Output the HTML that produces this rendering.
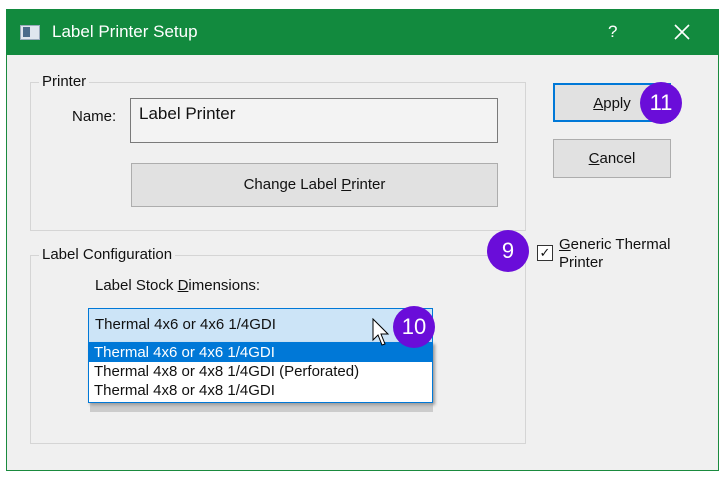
<!DOCTYPE html><html><head><style>
body{margin:0;width:725px;height:481px;background:#fff;position:relative;font-family:"Liberation Sans",sans-serif;font-size:15px;color:#111;overflow:hidden}
.a{position:absolute}
.btn{background:#e1e1e1;border:1px solid #adadad;text-align:center;box-sizing:border-box}
.badge{position:absolute;width:42px;height:42px;border-radius:50%;background:#6a0dd9;color:#fff;font-size:22px;text-align:center;line-height:42px}
.gb{position:absolute;border:1px solid #d5d5d5;box-sizing:border-box}
.lg{position:absolute;background:#f0f0f0;padding:0 3px;top:-10px;left:8px}
</style></head><body>
<div class="a" style="left:6px;top:9px;width:713px;height:462px;background:#f0f0f0;border:1px solid #1a8a3e;box-sizing:border-box"></div>
<div class="a" style="left:6px;top:9px;width:713px;height:46px;background:#128a3e"></div>
<div class="a" style="left:20px;top:25px;width:18px;height:13px;background:#dfe6ee;border:1px solid #9ab"></div>
<div class="a" style="left:23px;top:27px;width:7px;height:10px;background:#4a6b8a"></div>
<div class="a" style="left:52px;top:22px;color:#fff;font-size:17px">Label Printer Setup</div>
<div class="a" style="left:608px;top:22px;color:#fff;font-size:17px">?</div>
<svg class="a" style="left:674px;top:24px" width="16" height="16"><path d="M1 1L15 15M15 1L1 15" stroke="#fff" stroke-width="1.6"/></svg>
<div class="gb" style="left:30px;top:82px;width:496px;height:149px"><span class="lg">Printer</span></div>
<div class="a" style="left:72px;top:108px">Name:</div>
<div class="a" style="left:130px;top:98px;width:368px;height:45px;background:#f3f3f3;border:1px solid #7a7a7a;box-sizing:border-box;padding:5px 8px;font-size:17px">Label Printer</div>
<div class="a btn" style="left:131px;top:163px;width:367px;height:44px;line-height:42px">Change Label <u>P</u>rinter</div>
<div class="a btn" style="left:553px;top:83px;width:118px;height:39px;line-height:37px;border:2px solid #0078d7"><u>A</u>pply</div>
<div class="a btn" style="left:553px;top:139px;width:118px;height:39px;line-height:37px"><u>C</u>ancel</div>
<div class="gb" style="left:30px;top:255px;width:496px;height:189px"><span class="lg">Label Configuration</span></div>
<div class="a" style="left:95px;top:277px">Label Stock <u>D</u>imensions:</div>
<div class="a" style="left:90px;top:390px;width:343px;height:22px;background:#ccc"></div>
<div class="a" style="left:88px;top:308px;width:345px;height:35px;background:#cce4f7;border:1px solid #0078d7;box-sizing:border-box;padding:7px 6px">Thermal 4x6 or 4x6 1/4GDI</div>
<div class="a" style="left:88px;top:342px;width:345px;height:61px;background:#fff;border:1px solid #0078d7;box-sizing:border-box;box-shadow:2px 2px 3px #999;line-height:19px">
<div style="background:#0078d7;color:#fff;padding-left:5px">Thermal 4x6 or 4x6 1/4GDI</div>
<div style="padding-left:5px">Thermal 4x8 or 4x8 1/4GDI (Perforated)</div>
<div style="padding-left:5px">Thermal 4x8 or 4x8 1/4GDI</div></div>
<svg class="a" style="left:372px;top:318px" width="20" height="30"><path d="M1 1 L1 22 L6 17 L10 27 L13 26 L9 16 L16 16 Z" fill="#fff" stroke="#000"/></svg>
<div class="a" style="left:537px;top:245px;width:14px;height:14px;border:1px solid #333;background:#fff;font-size:13px;line-height:14px;text-align:center">✓</div>
<div class="a" style="left:559px;top:236px;line-height:18px"><u>G</u>eneric Thermal<br>Printer</div>
<div class="badge" style="left:640px;top:82px">11</div>
<div class="badge" style="left:487px;top:230px">9</div>
<div class="badge" style="left:393px;top:306px">10</div>
</body></html>
